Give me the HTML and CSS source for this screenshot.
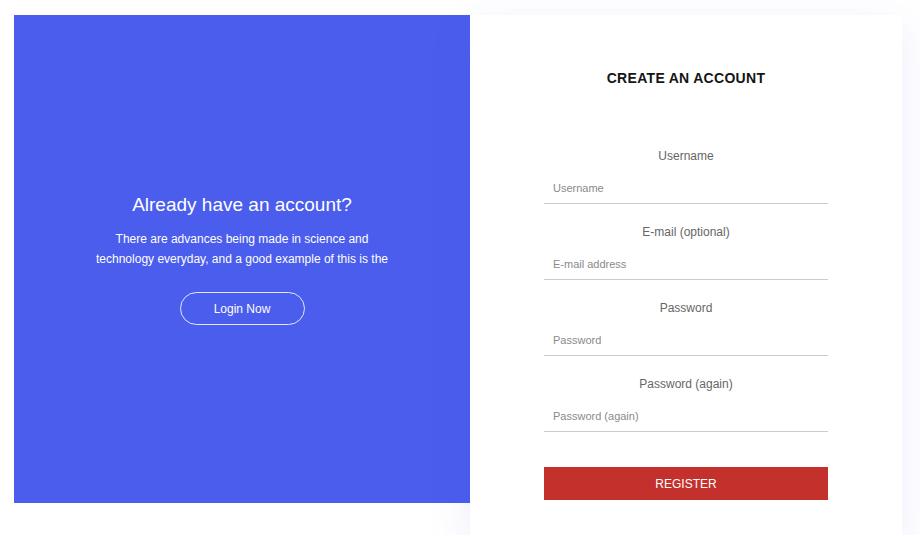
FILE: index.html
```html
<!DOCTYPE html>
<html lang="en">
<head>
<meta charset="utf-8">
<title>Create an account</title>
<link rel="stylesheet" href="styles.css">
</head>
<body>
<div class="page">
  <section class="promo">
    <h2 class="promo-title">Already have an account?</h2>
    <p class="promo-text">There are advances being made in science and technology everyday, and a good example of this is the</p>
    <button class="login-btn" type="button">Login Now</button>
  </section>
  <section class="card">
    <h1 class="card-title">CREATE AN ACCOUNT</h1>
    <form class="form">
      <div class="field">
        <label class="field-label" for="u">Username</label>
        <input class="field-input" id="u" type="text" placeholder="Username">
      </div>
      <div class="field">
        <label class="field-label" for="e">E-mail (optional)</label>
        <input class="field-input" id="e" type="email" placeholder="E-mail address">
      </div>
      <div class="field">
        <label class="field-label" for="p">Password</label>
        <input class="field-input" id="p" type="password" placeholder="Password">
      </div>
      <div class="field">
        <label class="field-label" for="p2">Password (again)</label>
        <input class="field-input" id="p2" type="password" placeholder="Password (again)">
      </div>
      <button class="register-btn" type="button">REGISTER</button>
    </form>
  </section>
</div>
</body>
</html>
```

FILE: styles.css
```css
* { box-sizing: border-box; }
html, body {
  margin: 0;
  padding: 0;
  background: #ffffff;
  font-family: "Liberation Sans", Arial, sans-serif;
}
.page {
  display: flex;
  align-items: flex-start;
  padding: 15px 0 0 14px;
}
.promo {
  width: 456px;
  height: 488px;
  background: #4a5ded;
  color: #ffffff;
  display: flex;
  flex-direction: column;
  align-items: center;
  justify-content: center;
  text-align: center;
}
.promo-title {
  margin: 0;
  font-size: 19px;
  line-height: 24px;
  font-weight: normal;
}
.promo-text {
  margin: 12px 0 0;
  width: 300px;
  font-size: 12px;
  line-height: 20px;
}
.login-btn {
  margin-top: 23px;
  width: 125px;
  height: 33px;
  border: 1px solid rgba(255,255,255,0.85);
  border-radius: 17px;
  background: transparent;
  color: #ffffff;
  font-family: inherit;
  font-size: 12px;
  padding: 0;
}
.card {
  width: 432px;
  height: 520px;
  background: #ffffff;
  box-shadow: 0 12px 40px rgba(70, 80, 230, 0.1);
  padding: 55px 74px 35px;
  display: flex;
  flex-direction: column;
  align-items: center;
}
.card-title {
  margin: 0;
  font-size: 14px;
  line-height: 16px;
  font-weight: bold;
  letter-spacing: 0.3px;
  color: #151515;
}
.form {
  width: 284px;
  margin-top: 62px;
  display: flex;
  flex-direction: column;
}
.field {
  display: flex;
  flex-direction: column;
  margin-bottom: 20px;
}
.field:last-of-type { margin-bottom: 35px; }
.field-label {
  text-align: center;
  font-size: 12px;
  line-height: 16px;
  color: #666666;
}
.field-input {
  margin-top: 8px;
  height: 32px;
  border: none;
  border-bottom: 1px solid #cccccc;
  padding: 0 9px;
  font-family: inherit;
  font-size: 11px;
  color: #444;
  outline: none;
  background: transparent;
}
.field-input::placeholder { color: #8a8a8a; }
.register-btn {
  height: 33px;
  border: none;
  background: #c4302b;
  color: #ffffff;
  font-family: inherit;
  font-size: 12px;
  padding: 0;
}
```
